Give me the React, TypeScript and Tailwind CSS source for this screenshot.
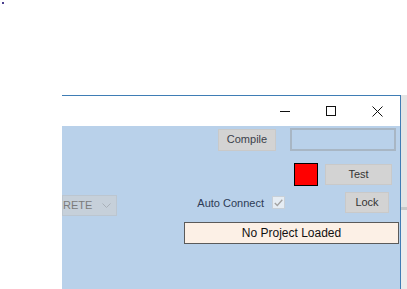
export default function App() {
  const font = { fontFamily: '"Segoe UI", "Liberation Sans", Arial, sans-serif' };
  return (
    <div className="relative w-[407px] h-[289px] overflow-hidden bg-white text-[11px]" style={font}>
      <div className="absolute left-[2px] top-[2px] w-[2px] h-[2px] bg-[#4b3f8f]" />
      <div className="flex pt-[95px] pl-[62px] h-full">
        <div className="w-[339px] h-full flex flex-col border-t border-r border-[#3f7db5]">
          {/* title bar */}
          <div className="h-[30px] bg-white flex justify-end shrink-0">
            <div className="w-[46px] flex items-center justify-center">
              <div className="w-[10px] h-px bg-[#111]" />
            </div>
            <div className="w-[46px] flex items-center justify-center">
              <div className="w-[10px] h-[10px] border border-[#111]" />
            </div>
            <div className="w-[46px] flex items-center justify-center">
              <svg width="11" height="11" viewBox="0 0 11 11" fill="none" stroke="#111" strokeWidth="1">
                <path d="M0.5 0.5 L10.5 10.5 M10.5 0.5 L0.5 10.5" />
              </svg>
            </div>
          </div>
          {/* body */}
          <div className="flex-1 bg-[#b9d1ea] pt-[2px]">
            <div className="flex justify-end items-center h-[23px] pr-[4px] gap-[14px]">
              <div className="w-[58px] h-[22px] bg-[#d3d3d3] border border-[#c9c9c9] flex items-center justify-center text-[#3a3f4a]">
                Compile
              </div>
              <div className="w-[106px] h-[23px] border-2 border-[#a8b6c4] bg-[#b9d1ea]" />
            </div>
            <div className="flex justify-end items-center h-[23px] pr-[8px] gap-[7px] mt-[12px]">
              <div className="w-[24px] h-[23px] bg-[#ff0000] border border-black" />
              <div className="w-[67px] h-[21px] bg-[#d3d3d3] border border-[#c9c9c9] flex items-center justify-center text-[#333]">
                Test
              </div>
            </div>
            <div className="flex items-start justify-between h-[24px] mt-[6px] pr-[11px]">
              <div className="mt-[3px] w-[55px] h-[21px] bg-[#c6d0da] border border-[#bcc6d0] flex items-center justify-between pr-[5px] text-[#7b7b7b]">
                <span>RETE</span>
                <svg width="9" height="5" viewBox="0 0 9 5" fill="none" stroke="#a9b0b8" strokeWidth="1">
                  <path d="M0.5 0.5 L4.5 4.5 L8.5 0.5" />
                </svg>
              </div>
              <div className="flex items-start">
                <div className="mt-[2px] h-[18px] flex items-center text-[#2d3b55]">Auto Connect</div>
                <div className="ml-[8px] mt-[4px] w-[13px] h-[13px] bg-[#e6edf4] border border-[#c8d0d8] flex items-center justify-center">
                  <svg width="9" height="8" viewBox="0 0 9 8" fill="none" stroke="#a3a3a3" strokeWidth="1.3">
                    <path d="M0.8 4 L3.3 6.5 L8.3 0.8" />
                  </svg>
                </div>
                <div className="ml-[60px] w-[44px] h-[21px] bg-[#d3d3d3] border border-[#c9c9c9] flex items-center justify-center text-[#333]">
                  Lock
                </div>
              </div>
            </div>
            <div className="flex justify-end pr-[1px] mt-[6px]">
              <div className="w-[215px] h-[22px] bg-[#fcf0e6] border border-[#5a5a5a] flex items-center justify-center text-[#111] text-[12px]">
                No Project Loaded
              </div>
            </div>
          </div>
        </div>
        <div className="flex-1 h-full bg-[#e4e4e4] flex flex-col">
          <div className="h-[112px]" />
          <div className="h-[3px] bg-[#c8c8c8]" />
          <div className="flex-1 bg-[#ececec]" />
        </div>
      </div>
    </div>
  );
}
